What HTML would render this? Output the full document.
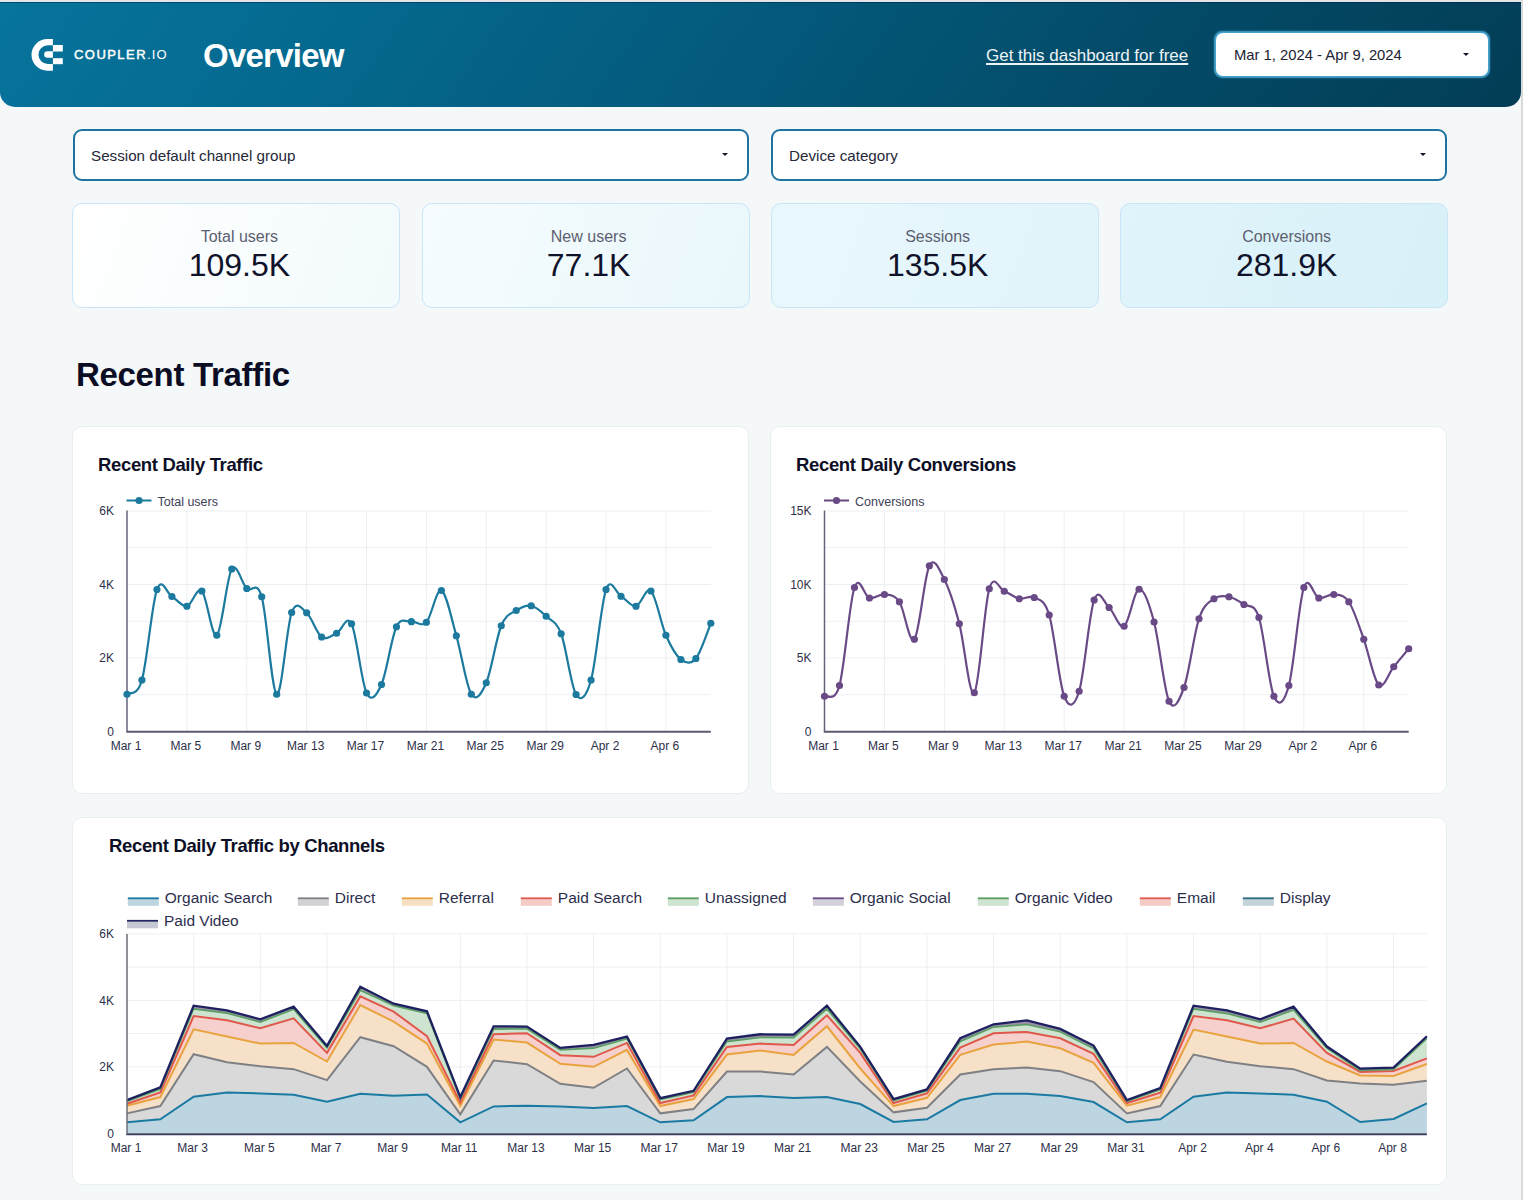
<!DOCTYPE html>
<html><head><meta charset="utf-8">
<style>
html,body{margin:0;padding:0;}
body{width:1523px;height:1200px;overflow:hidden;position:relative;background:#f4f8f9;font-family:"Liberation Sans", sans-serif;}
.abs{position:absolute;}
#topstrip{left:0;top:0;width:1523px;height:2px;background:#e4e5e7;}
#rightstrip{left:1521px;top:0;width:2px;height:1200px;background:#d8d9da;}
#header{left:0;top:2px;width:1521px;height:105px;border-radius:0 0 15px 15px;
  background:linear-gradient(125deg,#07749c 0%,#05698f 22%,#045a7c 48%,#034c69 72%,#033d56 100%);border-top:1px solid rgba(0,25,70,0.45);box-sizing:border-box;}
.logo-text{left:74px;top:47px;color:#fff;font-size:13px;letter-spacing:1.45px;font-weight:normal;-webkit-text-stroke:0.45px #fff;}
.overview{left:203px;top:37px;color:#fff;font-size:33px;font-weight:bold;letter-spacing:-0.75px;}
.gethis{left:986px;top:46px;color:#eef4f7;font-size:17px;text-decoration:underline;text-decoration-thickness:1.6px;text-underline-offset:1.6px;}
.datebox{left:1216px;top:33px;width:272px;height:43px;background:#fff;border-radius:7px;box-shadow:0 0 1.5px 1.2px rgba(80,175,220,0.9);}
.datebox span{position:absolute;left:18px;top:13.5px;font-size:14.8px;color:#202233;}
.caret{position:absolute;width:0;height:0;border-left:3.3px solid transparent;border-right:3.3px solid transparent;border-top:3.6px solid #15152a;}
.dd{top:129px;width:676px;height:52px;background:#fff;border:2.2px solid #1e74a0;border-radius:9px;box-sizing:border-box;}
.dd span{position:absolute;left:16px;top:15.5px;font-size:15.2px;color:#262838;}
.kpi{top:202.6px;width:328px;height:105.4px;border:1.8px solid #c9e5f8;border-radius:10px;box-sizing:border-box;}
.kpi .lab{position:absolute;left:6px;right:0;top:24px;text-align:center;font-size:16px;color:#5c6070;}
.kpi .val{position:absolute;left:6px;right:0;top:43px;text-align:center;font-size:32px;color:#10122a;}
.h2{left:76px;top:356px;font-size:33px;font-weight:bold;color:#0b0d24;letter-spacing:-0.32px;}
.card{background:#fff;border:1px solid #e9eef1;border-radius:10px;box-sizing:border-box;}
.ctitle{font-size:18.5px;font-weight:bold;color:#0d0f26;letter-spacing:-0.35px;}
svg text{font-family:"Liberation Sans", sans-serif;}
</style></head><body>
<div id="topstrip" class="abs"></div>
<div id="header" class="abs"></div>
<div id="rightstrip" class="abs"></div>
<svg class="abs" style="left:0;top:0" width="80" height="80" viewBox="0 0 80 80">
  <path d="M52.9,39 L47.35,39 A15.85,15.85 0 0 0 47.35,70.7 L52.9,70.7 L52.9,64 L47.85,64 A9.4,9.4 0 0 1 47.85,45.2 L52.9,45.2 Z" fill="#fff"/>
  <path d="M52.9,51.2 L47.5,51.2 A3.3,3.3 0 0 0 47.5,57.85 L52.9,57.85 Z" fill="#fff"/>
  <rect x="52.9" y="45" width="9.9" height="6.5" fill="#fff"/>
  <rect x="52.9" y="58.2" width="9.9" height="6" fill="#fff"/>
</svg>
<div class="abs logo-text">COUPLER<span style="-webkit-text-stroke:0;letter-spacing:1.2px">.IO</span></div>
<div class="abs overview">Overview</div>
<div class="abs gethis">Get this dashboard for free</div>
<div class="abs datebox"><span>Mar 1, 2024 - Apr 9, 2024</span><div class="caret" style="left:247px;top:20px"></div></div>

<div class="abs dd" style="left:73px"><span>Session default channel group</span><div class="caret" style="left:647px;top:22px"></div></div>
<div class="abs dd" style="left:771px"><span>Device category</span><div class="caret" style="left:647px;top:22px"></div></div>

<div class="abs kpi" style="left:72.4px;background:linear-gradient(110deg,#ffffff 0%,#f2fafc 100%)"><div class="lab">Total users</div><div class="val">109.5K</div></div>
<div class="abs kpi" style="left:421.6px;background:linear-gradient(110deg,#f6fcfe 0%,#e9f7fb 100%)"><div class="lab">New users</div><div class="val">77.1K</div></div>
<div class="abs kpi" style="left:770.6px;background:linear-gradient(110deg,#e9f8fd 0%,#e1f4fa 100%)"><div class="lab">Sessions</div><div class="val">135.5K</div></div>
<div class="abs kpi" style="left:1119.6px;background:linear-gradient(110deg,#e0f4fb 0%,#d8f0f8 100%)"><div class="lab">Conversions</div><div class="val">281.9K</div></div>

<div class="abs h2">Recent Traffic</div>

<div class="abs card" style="left:72.3px;top:425.5px;width:676.5px;height:368.8px"></div>
<div class="abs card" style="left:770.3px;top:425.5px;width:676.5px;height:368.8px"></div>
<div class="abs card" style="left:72.3px;top:816.5px;width:1374.5px;height:368.5px"></div>
<div class="abs ctitle" style="left:98px;top:454px">Recent Daily Traffic</div>
<div class="abs ctitle" style="left:796px;top:454px">Recent Daily Conversions</div>
<div class="abs ctitle" style="left:109px;top:835px">Recent Daily Traffic by Channels</div>

<svg class="abs" style="left:0;top:0" width="1523" height="1200" viewBox="0 0 1523 1200">
<line x1="127" y1="694.75" x2="710.83" y2="694.75" stroke="#eceff1" stroke-width="1"/>
<line x1="127" y1="658.00" x2="710.83" y2="658.00" stroke="#eceff1" stroke-width="1"/>
<line x1="127" y1="621.25" x2="710.83" y2="621.25" stroke="#eceff1" stroke-width="1"/>
<line x1="127" y1="584.50" x2="710.83" y2="584.50" stroke="#eceff1" stroke-width="1"/>
<line x1="127" y1="547.75" x2="710.83" y2="547.75" stroke="#eceff1" stroke-width="1"/>
<line x1="127" y1="511.00" x2="710.83" y2="511.00" stroke="#eceff1" stroke-width="1"/>
<line x1="186.88" y1="510.5" x2="186.88" y2="731" stroke="#eceff1" stroke-width="1"/>
<line x1="246.76" y1="510.5" x2="246.76" y2="731" stroke="#eceff1" stroke-width="1"/>
<line x1="306.64" y1="510.5" x2="306.64" y2="731" stroke="#eceff1" stroke-width="1"/>
<line x1="366.52" y1="510.5" x2="366.52" y2="731" stroke="#eceff1" stroke-width="1"/>
<line x1="426.40" y1="510.5" x2="426.40" y2="731" stroke="#eceff1" stroke-width="1"/>
<line x1="486.28" y1="510.5" x2="486.28" y2="731" stroke="#eceff1" stroke-width="1"/>
<line x1="546.16" y1="510.5" x2="546.16" y2="731" stroke="#eceff1" stroke-width="1"/>
<line x1="606.04" y1="510.5" x2="606.04" y2="731" stroke="#eceff1" stroke-width="1"/>
<line x1="665.92" y1="510.5" x2="665.92" y2="731" stroke="#eceff1" stroke-width="1"/>
<line x1="127" y1="510.5" x2="127" y2="731" stroke="#65637c" stroke-width="1.5"/>
<line x1="126.25" y1="731.8" x2="710.83" y2="731.8" stroke="#5b5a70" stroke-width="2"/>
<path d="M127.00,694.25 C129.50,691.87 136.98,697.45 141.97,679.99 C146.96,662.53 151.95,603.43 156.94,589.51 C161.93,575.60 166.92,593.71 171.91,596.50 C176.90,599.28 181.89,607.15 186.88,606.23 C191.87,605.31 196.86,586.14 201.85,590.98 C206.84,595.82 211.83,638.93 216.82,635.27 C221.81,631.60 226.80,576.80 231.79,569.01 C236.78,561.21 241.77,583.86 246.76,588.48 C251.75,593.11 256.74,579.12 261.73,596.75 C266.72,614.38 271.71,691.62 276.70,694.25 C281.69,696.88 286.68,626.10 291.67,612.52 C296.66,598.93 301.65,608.66 306.64,612.74 C311.63,616.82 316.62,633.58 321.61,636.99 C326.60,640.41 331.59,635.45 336.58,633.25 C341.57,631.04 346.56,613.80 351.55,623.76 C356.54,633.72 361.53,682.88 366.52,693.00 C371.51,703.13 376.50,695.55 381.49,684.51 C386.48,673.47 391.47,637.21 396.46,626.74 C401.45,616.27 406.44,622.42 411.43,621.67 C416.42,620.92 421.41,627.45 426.40,622.26 C431.39,617.06 436.38,588.26 441.37,590.50 C446.36,592.75 451.35,618.45 456.34,635.74 C461.33,653.03 466.32,686.42 471.31,694.25 C476.30,702.08 481.29,694.16 486.28,682.75 C491.27,671.33 496.26,637.79 501.25,625.75 C506.24,613.71 511.23,613.83 516.22,610.50 C521.21,607.16 526.20,604.79 531.19,605.76 C536.18,606.72 541.17,611.60 546.16,616.27 C551.15,620.93 556.14,620.72 561.13,633.76 C566.12,646.80 571.11,686.80 576.10,694.51 C581.09,702.21 586.08,697.49 591.07,679.99 C596.06,662.49 601.05,603.47 606.04,589.51 C611.03,575.55 616.02,593.45 621.01,596.24 C626.00,599.02 630.99,607.11 635.98,606.23 C640.97,605.36 645.96,586.14 650.95,590.98 C655.94,595.82 660.93,623.85 665.92,635.27 C670.91,646.68 675.90,655.61 680.89,659.48 C685.88,663.36 690.87,664.53 695.86,658.49 C700.85,652.45 708.34,629.12 710.83,623.25" fill="none" stroke="#1b7a9e" stroke-width="2.2"/>
<circle cx="127.00" cy="694.25" r="3.6" fill="#1b7a9e"/>
<circle cx="141.97" cy="679.99" r="3.6" fill="#1b7a9e"/>
<circle cx="156.94" cy="589.51" r="3.6" fill="#1b7a9e"/>
<circle cx="171.91" cy="596.50" r="3.6" fill="#1b7a9e"/>
<circle cx="186.88" cy="606.23" r="3.6" fill="#1b7a9e"/>
<circle cx="201.85" cy="590.98" r="3.6" fill="#1b7a9e"/>
<circle cx="216.82" cy="635.27" r="3.6" fill="#1b7a9e"/>
<circle cx="231.79" cy="569.01" r="3.6" fill="#1b7a9e"/>
<circle cx="246.76" cy="588.48" r="3.6" fill="#1b7a9e"/>
<circle cx="261.73" cy="596.75" r="3.6" fill="#1b7a9e"/>
<circle cx="276.70" cy="694.25" r="3.6" fill="#1b7a9e"/>
<circle cx="291.67" cy="612.52" r="3.6" fill="#1b7a9e"/>
<circle cx="306.64" cy="612.74" r="3.6" fill="#1b7a9e"/>
<circle cx="321.61" cy="636.99" r="3.6" fill="#1b7a9e"/>
<circle cx="336.58" cy="633.25" r="3.6" fill="#1b7a9e"/>
<circle cx="351.55" cy="623.76" r="3.6" fill="#1b7a9e"/>
<circle cx="366.52" cy="693.00" r="3.6" fill="#1b7a9e"/>
<circle cx="381.49" cy="684.51" r="3.6" fill="#1b7a9e"/>
<circle cx="396.46" cy="626.74" r="3.6" fill="#1b7a9e"/>
<circle cx="411.43" cy="621.67" r="3.6" fill="#1b7a9e"/>
<circle cx="426.40" cy="622.26" r="3.6" fill="#1b7a9e"/>
<circle cx="441.37" cy="590.50" r="3.6" fill="#1b7a9e"/>
<circle cx="456.34" cy="635.74" r="3.6" fill="#1b7a9e"/>
<circle cx="471.31" cy="694.25" r="3.6" fill="#1b7a9e"/>
<circle cx="486.28" cy="682.75" r="3.6" fill="#1b7a9e"/>
<circle cx="501.25" cy="625.75" r="3.6" fill="#1b7a9e"/>
<circle cx="516.22" cy="610.50" r="3.6" fill="#1b7a9e"/>
<circle cx="531.19" cy="605.76" r="3.6" fill="#1b7a9e"/>
<circle cx="546.16" cy="616.27" r="3.6" fill="#1b7a9e"/>
<circle cx="561.13" cy="633.76" r="3.6" fill="#1b7a9e"/>
<circle cx="576.10" cy="694.51" r="3.6" fill="#1b7a9e"/>
<circle cx="591.07" cy="679.99" r="3.6" fill="#1b7a9e"/>
<circle cx="606.04" cy="589.51" r="3.6" fill="#1b7a9e"/>
<circle cx="621.01" cy="596.24" r="3.6" fill="#1b7a9e"/>
<circle cx="635.98" cy="606.23" r="3.6" fill="#1b7a9e"/>
<circle cx="650.95" cy="590.98" r="3.6" fill="#1b7a9e"/>
<circle cx="665.92" cy="635.27" r="3.6" fill="#1b7a9e"/>
<circle cx="680.89" cy="659.48" r="3.6" fill="#1b7a9e"/>
<circle cx="695.86" cy="658.49" r="3.6" fill="#1b7a9e"/>
<circle cx="710.83" cy="623.25" r="3.6" fill="#1b7a9e"/>
<text x="114" y="735.50" text-anchor="end" font-size="12" fill="#2d2f48">0</text>
<text x="114" y="662.00" text-anchor="end" font-size="12" fill="#2d2f48">2K</text>
<text x="114" y="588.50" text-anchor="end" font-size="12" fill="#2d2f48">4K</text>
<text x="114" y="515.00" text-anchor="end" font-size="12" fill="#2d2f48">6K</text>
<text x="126.00" y="749.8" text-anchor="middle" font-size="12" fill="#2d2f48">Mar 1</text>
<text x="185.88" y="749.8" text-anchor="middle" font-size="12" fill="#2d2f48">Mar 5</text>
<text x="245.76" y="749.8" text-anchor="middle" font-size="12" fill="#2d2f48">Mar 9</text>
<text x="305.64" y="749.8" text-anchor="middle" font-size="12" fill="#2d2f48">Mar 13</text>
<text x="365.52" y="749.8" text-anchor="middle" font-size="12" fill="#2d2f48">Mar 17</text>
<text x="425.40" y="749.8" text-anchor="middle" font-size="12" fill="#2d2f48">Mar 21</text>
<text x="485.28" y="749.8" text-anchor="middle" font-size="12" fill="#2d2f48">Mar 25</text>
<text x="545.16" y="749.8" text-anchor="middle" font-size="12" fill="#2d2f48">Mar 29</text>
<text x="605.04" y="749.8" text-anchor="middle" font-size="12" fill="#2d2f48">Apr 2</text>
<text x="664.92" y="749.8" text-anchor="middle" font-size="12" fill="#2d2f48">Apr 6</text>
<line x1="126.5" y1="500.5" x2="151.5" y2="500.5" stroke="#1b7a9e" stroke-width="2"/>
<circle cx="139.0" cy="500.5" r="3.6" fill="#1b7a9e"/>
<text x="157.5" y="505.8" font-size="12.5" fill="#3f4159">Total users</text>
<line x1="824.5" y1="694.75" x2="1408.72" y2="694.75" stroke="#eceff1" stroke-width="1"/>
<line x1="824.5" y1="658.00" x2="1408.72" y2="658.00" stroke="#eceff1" stroke-width="1"/>
<line x1="824.5" y1="621.25" x2="1408.72" y2="621.25" stroke="#eceff1" stroke-width="1"/>
<line x1="824.5" y1="584.50" x2="1408.72" y2="584.50" stroke="#eceff1" stroke-width="1"/>
<line x1="824.5" y1="547.75" x2="1408.72" y2="547.75" stroke="#eceff1" stroke-width="1"/>
<line x1="824.5" y1="511.00" x2="1408.72" y2="511.00" stroke="#eceff1" stroke-width="1"/>
<line x1="884.42" y1="510.5" x2="884.42" y2="731" stroke="#eceff1" stroke-width="1"/>
<line x1="944.34" y1="510.5" x2="944.34" y2="731" stroke="#eceff1" stroke-width="1"/>
<line x1="1004.26" y1="510.5" x2="1004.26" y2="731" stroke="#eceff1" stroke-width="1"/>
<line x1="1064.18" y1="510.5" x2="1064.18" y2="731" stroke="#eceff1" stroke-width="1"/>
<line x1="1124.10" y1="510.5" x2="1124.10" y2="731" stroke="#eceff1" stroke-width="1"/>
<line x1="1184.02" y1="510.5" x2="1184.02" y2="731" stroke="#eceff1" stroke-width="1"/>
<line x1="1243.94" y1="510.5" x2="1243.94" y2="731" stroke="#eceff1" stroke-width="1"/>
<line x1="1303.86" y1="510.5" x2="1303.86" y2="731" stroke="#eceff1" stroke-width="1"/>
<line x1="1363.78" y1="510.5" x2="1363.78" y2="731" stroke="#eceff1" stroke-width="1"/>
<line x1="824.5" y1="510.5" x2="824.5" y2="731" stroke="#65637c" stroke-width="1.5"/>
<line x1="823.75" y1="731.8" x2="1408.72" y2="731.8" stroke="#5b5a70" stroke-width="2"/>
<path d="M824.50,696.25 C827.00,694.46 834.49,703.63 839.48,685.50 C844.47,667.38 849.47,602.08 854.46,587.50 C859.45,572.91 864.45,596.83 869.44,597.99 C874.43,599.16 879.43,593.87 884.42,594.50 C889.41,595.12 894.41,594.28 899.40,601.74 C904.39,609.20 909.39,645.25 914.38,639.26 C919.37,633.26 924.37,575.72 929.36,565.76 C934.35,555.80 939.35,569.84 944.34,579.50 C949.33,589.17 954.33,604.87 959.32,623.75 C964.31,642.62 969.31,698.58 974.30,692.75 C979.29,686.92 984.29,605.67 989.28,588.75 C994.27,571.83 999.27,589.58 1004.26,591.25 C1009.25,592.91 1014.25,597.70 1019.24,598.74 C1024.23,599.79 1029.23,594.78 1034.22,597.49 C1039.21,600.20 1044.21,598.54 1049.20,615.00 C1054.19,631.46 1059.19,683.54 1064.18,696.25 C1069.17,708.96 1074.17,707.29 1079.16,691.25 C1084.15,675.21 1089.15,613.95 1094.14,599.99 C1099.13,586.04 1104.13,603.13 1109.12,607.51 C1114.11,611.88 1119.11,629.29 1124.10,626.25 C1129.09,623.20 1134.09,589.96 1139.08,589.25 C1144.07,588.54 1149.07,603.33 1154.06,622.00 C1159.05,640.67 1164.05,690.33 1169.04,701.25 C1174.03,712.16 1179.03,701.25 1184.02,687.50 C1189.01,673.75 1194.01,633.54 1199.00,618.75 C1203.99,603.96 1208.99,602.41 1213.98,598.74 C1218.97,595.08 1223.97,595.78 1228.96,596.74 C1233.95,597.71 1238.95,601.05 1243.94,604.51 C1248.93,607.97 1253.93,602.21 1258.92,617.50 C1263.91,632.79 1268.91,684.92 1273.90,696.25 C1278.89,707.58 1283.89,703.63 1288.88,685.50 C1293.87,667.38 1298.87,602.08 1303.86,587.50 C1308.85,572.91 1313.85,596.83 1318.84,597.99 C1323.83,599.16 1328.83,593.87 1333.82,594.50 C1338.81,595.12 1343.81,594.28 1348.80,601.74 C1353.79,609.20 1358.79,625.38 1363.78,639.26 C1368.77,653.13 1373.77,680.42 1378.76,685.00 C1383.75,689.59 1388.75,672.79 1393.74,666.75 C1398.73,660.70 1406.22,651.75 1408.72,648.75" fill="none" stroke="#6a4a86" stroke-width="2.2"/>
<circle cx="824.50" cy="696.25" r="3.6" fill="#6a4a86"/>
<circle cx="839.48" cy="685.50" r="3.6" fill="#6a4a86"/>
<circle cx="854.46" cy="587.50" r="3.6" fill="#6a4a86"/>
<circle cx="869.44" cy="597.99" r="3.6" fill="#6a4a86"/>
<circle cx="884.42" cy="594.50" r="3.6" fill="#6a4a86"/>
<circle cx="899.40" cy="601.74" r="3.6" fill="#6a4a86"/>
<circle cx="914.38" cy="639.26" r="3.6" fill="#6a4a86"/>
<circle cx="929.36" cy="565.76" r="3.6" fill="#6a4a86"/>
<circle cx="944.34" cy="579.50" r="3.6" fill="#6a4a86"/>
<circle cx="959.32" cy="623.75" r="3.6" fill="#6a4a86"/>
<circle cx="974.30" cy="692.75" r="3.6" fill="#6a4a86"/>
<circle cx="989.28" cy="588.75" r="3.6" fill="#6a4a86"/>
<circle cx="1004.26" cy="591.25" r="3.6" fill="#6a4a86"/>
<circle cx="1019.24" cy="598.74" r="3.6" fill="#6a4a86"/>
<circle cx="1034.22" cy="597.49" r="3.6" fill="#6a4a86"/>
<circle cx="1049.20" cy="615.00" r="3.6" fill="#6a4a86"/>
<circle cx="1064.18" cy="696.25" r="3.6" fill="#6a4a86"/>
<circle cx="1079.16" cy="691.25" r="3.6" fill="#6a4a86"/>
<circle cx="1094.14" cy="599.99" r="3.6" fill="#6a4a86"/>
<circle cx="1109.12" cy="607.51" r="3.6" fill="#6a4a86"/>
<circle cx="1124.10" cy="626.25" r="3.6" fill="#6a4a86"/>
<circle cx="1139.08" cy="589.25" r="3.6" fill="#6a4a86"/>
<circle cx="1154.06" cy="622.00" r="3.6" fill="#6a4a86"/>
<circle cx="1169.04" cy="701.25" r="3.6" fill="#6a4a86"/>
<circle cx="1184.02" cy="687.50" r="3.6" fill="#6a4a86"/>
<circle cx="1199.00" cy="618.75" r="3.6" fill="#6a4a86"/>
<circle cx="1213.98" cy="598.74" r="3.6" fill="#6a4a86"/>
<circle cx="1228.96" cy="596.74" r="3.6" fill="#6a4a86"/>
<circle cx="1243.94" cy="604.51" r="3.6" fill="#6a4a86"/>
<circle cx="1258.92" cy="617.50" r="3.6" fill="#6a4a86"/>
<circle cx="1273.90" cy="696.25" r="3.6" fill="#6a4a86"/>
<circle cx="1288.88" cy="685.50" r="3.6" fill="#6a4a86"/>
<circle cx="1303.86" cy="587.50" r="3.6" fill="#6a4a86"/>
<circle cx="1318.84" cy="597.99" r="3.6" fill="#6a4a86"/>
<circle cx="1333.82" cy="594.50" r="3.6" fill="#6a4a86"/>
<circle cx="1348.80" cy="601.74" r="3.6" fill="#6a4a86"/>
<circle cx="1363.78" cy="639.26" r="3.6" fill="#6a4a86"/>
<circle cx="1378.76" cy="685.00" r="3.6" fill="#6a4a86"/>
<circle cx="1393.74" cy="666.75" r="3.6" fill="#6a4a86"/>
<circle cx="1408.72" cy="648.75" r="3.6" fill="#6a4a86"/>
<text x="811.5" y="735.50" text-anchor="end" font-size="12" fill="#2d2f48">0</text>
<text x="811.5" y="662.00" text-anchor="end" font-size="12" fill="#2d2f48">5K</text>
<text x="811.5" y="588.50" text-anchor="end" font-size="12" fill="#2d2f48">10K</text>
<text x="811.5" y="515.00" text-anchor="end" font-size="12" fill="#2d2f48">15K</text>
<text x="823.50" y="749.8" text-anchor="middle" font-size="12" fill="#2d2f48">Mar 1</text>
<text x="883.42" y="749.8" text-anchor="middle" font-size="12" fill="#2d2f48">Mar 5</text>
<text x="943.34" y="749.8" text-anchor="middle" font-size="12" fill="#2d2f48">Mar 9</text>
<text x="1003.26" y="749.8" text-anchor="middle" font-size="12" fill="#2d2f48">Mar 13</text>
<text x="1063.18" y="749.8" text-anchor="middle" font-size="12" fill="#2d2f48">Mar 17</text>
<text x="1123.10" y="749.8" text-anchor="middle" font-size="12" fill="#2d2f48">Mar 21</text>
<text x="1183.02" y="749.8" text-anchor="middle" font-size="12" fill="#2d2f48">Mar 25</text>
<text x="1242.94" y="749.8" text-anchor="middle" font-size="12" fill="#2d2f48">Mar 29</text>
<text x="1302.86" y="749.8" text-anchor="middle" font-size="12" fill="#2d2f48">Apr 2</text>
<text x="1362.78" y="749.8" text-anchor="middle" font-size="12" fill="#2d2f48">Apr 6</text>
<line x1="824.0" y1="500.5" x2="849.0" y2="500.5" stroke="#6a4a86" stroke-width="2"/>
<circle cx="836.5" cy="500.5" r="3.6" fill="#6a4a86"/>
<text x="855.0" y="505.8" font-size="12.5" fill="#3f4159">Conversions</text>
<line x1="127" y1="1100.07" x2="1426.87" y2="1100.07" stroke="#eceff1" stroke-width="1"/>
<line x1="127" y1="1066.83" x2="1426.87" y2="1066.83" stroke="#eceff1" stroke-width="1"/>
<line x1="127" y1="1033.60" x2="1426.87" y2="1033.60" stroke="#eceff1" stroke-width="1"/>
<line x1="127" y1="1000.37" x2="1426.87" y2="1000.37" stroke="#eceff1" stroke-width="1"/>
<line x1="127" y1="967.13" x2="1426.87" y2="967.13" stroke="#eceff1" stroke-width="1"/>
<line x1="127" y1="933.90" x2="1426.87" y2="933.90" stroke="#eceff1" stroke-width="1"/>
<line x1="193.66" y1="933.9" x2="193.66" y2="1133.3" stroke="#eceff1" stroke-width="1"/>
<line x1="260.32" y1="933.9" x2="260.32" y2="1133.3" stroke="#eceff1" stroke-width="1"/>
<line x1="326.98" y1="933.9" x2="326.98" y2="1133.3" stroke="#eceff1" stroke-width="1"/>
<line x1="393.64" y1="933.9" x2="393.64" y2="1133.3" stroke="#eceff1" stroke-width="1"/>
<line x1="460.30" y1="933.9" x2="460.30" y2="1133.3" stroke="#eceff1" stroke-width="1"/>
<line x1="526.96" y1="933.9" x2="526.96" y2="1133.3" stroke="#eceff1" stroke-width="1"/>
<line x1="593.62" y1="933.9" x2="593.62" y2="1133.3" stroke="#eceff1" stroke-width="1"/>
<line x1="660.28" y1="933.9" x2="660.28" y2="1133.3" stroke="#eceff1" stroke-width="1"/>
<line x1="726.94" y1="933.9" x2="726.94" y2="1133.3" stroke="#eceff1" stroke-width="1"/>
<line x1="793.60" y1="933.9" x2="793.60" y2="1133.3" stroke="#eceff1" stroke-width="1"/>
<line x1="860.26" y1="933.9" x2="860.26" y2="1133.3" stroke="#eceff1" stroke-width="1"/>
<line x1="926.92" y1="933.9" x2="926.92" y2="1133.3" stroke="#eceff1" stroke-width="1"/>
<line x1="993.58" y1="933.9" x2="993.58" y2="1133.3" stroke="#eceff1" stroke-width="1"/>
<line x1="1060.24" y1="933.9" x2="1060.24" y2="1133.3" stroke="#eceff1" stroke-width="1"/>
<line x1="1126.90" y1="933.9" x2="1126.90" y2="1133.3" stroke="#eceff1" stroke-width="1"/>
<line x1="1193.56" y1="933.9" x2="1193.56" y2="1133.3" stroke="#eceff1" stroke-width="1"/>
<line x1="1260.22" y1="933.9" x2="1260.22" y2="1133.3" stroke="#eceff1" stroke-width="1"/>
<line x1="1326.88" y1="933.9" x2="1326.88" y2="1133.3" stroke="#eceff1" stroke-width="1"/>
<line x1="1393.54" y1="933.9" x2="1393.54" y2="1133.3" stroke="#eceff1" stroke-width="1"/>
<path d="M127.00,1122.33 L160.33,1119.34 L193.66,1096.74 L226.99,1092.42 L260.32,1093.42 L293.65,1094.75 L326.98,1101.73 L360.31,1093.75 L393.64,1095.75 L426.97,1094.42 L460.30,1122.33 L493.63,1106.38 L526.96,1105.72 L560.29,1106.38 L593.62,1108.04 L626.95,1106.05 L660.28,1122.33 L693.61,1120.34 L726.94,1097.08 L760.27,1096.08 L793.60,1098.07 L826.93,1097.08 L860.26,1104.05 L893.59,1122.00 L926.92,1119.34 L960.25,1100.07 L993.58,1093.75 L1026.91,1093.75 L1060.24,1096.08 L1093.57,1102.06 L1126.90,1122.33 L1160.23,1119.34 L1193.56,1096.74 L1226.89,1092.42 L1260.22,1093.42 L1293.55,1094.75 L1326.88,1101.73 L1360.21,1122.00 L1393.54,1119.01 L1426.87,1103.39 L1426.87,1133.30 L1393.54,1133.30 L1360.21,1133.30 L1326.88,1133.30 L1293.55,1133.30 L1260.22,1133.30 L1226.89,1133.30 L1193.56,1133.30 L1160.23,1133.30 L1126.90,1133.30 L1093.57,1133.30 L1060.24,1133.30 L1026.91,1133.30 L993.58,1133.30 L960.25,1133.30 L926.92,1133.30 L893.59,1133.30 L860.26,1133.30 L826.93,1133.30 L793.60,1133.30 L760.27,1133.30 L726.94,1133.30 L693.61,1133.30 L660.28,1133.30 L626.95,1133.30 L593.62,1133.30 L560.29,1133.30 L526.96,1133.30 L493.63,1133.30 L460.30,1133.30 L426.97,1133.30 L393.64,1133.30 L360.31,1133.30 L326.98,1133.30 L293.65,1133.30 L260.32,1133.30 L226.99,1133.30 L193.66,1133.30 L160.33,1133.30 L127.00,1133.30 Z" fill="#bcd5e1" stroke="none"/>
<path d="M127.00,1113.36 L160.33,1106.05 L193.66,1054.20 L226.99,1062.18 L260.32,1066.17 L293.65,1069.16 L326.98,1080.13 L360.31,1037.26 L393.64,1046.23 L426.97,1066.83 L460.30,1114.36 L493.63,1060.52 L526.96,1064.17 L560.29,1083.78 L593.62,1087.77 L626.95,1068.49 L660.28,1113.36 L693.61,1109.04 L726.94,1071.49 L760.27,1071.49 L793.60,1074.48 L826.93,1046.89 L860.26,1081.46 L893.59,1112.36 L926.92,1107.71 L960.25,1074.48 L993.58,1069.16 L1026.91,1067.50 L1060.24,1071.15 L1093.57,1082.12 L1126.90,1113.36 L1160.23,1106.05 L1193.56,1054.54 L1226.89,1061.85 L1260.22,1066.17 L1293.55,1069.16 L1326.88,1080.46 L1360.21,1083.45 L1393.54,1084.78 L1426.87,1080.79 L1426.87,1103.39 L1393.54,1119.01 L1360.21,1122.00 L1326.88,1101.73 L1293.55,1094.75 L1260.22,1093.42 L1226.89,1092.42 L1193.56,1096.74 L1160.23,1119.34 L1126.90,1122.33 L1093.57,1102.06 L1060.24,1096.08 L1026.91,1093.75 L993.58,1093.75 L960.25,1100.07 L926.92,1119.34 L893.59,1122.00 L860.26,1104.05 L826.93,1097.08 L793.60,1098.07 L760.27,1096.08 L726.94,1097.08 L693.61,1120.34 L660.28,1122.33 L626.95,1106.05 L593.62,1108.04 L560.29,1106.38 L526.96,1105.72 L493.63,1106.38 L460.30,1122.33 L426.97,1094.42 L393.64,1095.75 L360.31,1093.75 L326.98,1101.73 L293.65,1094.75 L260.32,1093.42 L226.99,1092.42 L193.66,1096.74 L160.33,1119.34 L127.00,1122.33 Z" fill="#d9d9da" stroke="none"/>
<path d="M127.00,1105.72 L160.33,1097.08 L193.66,1029.28 L226.99,1036.59 L260.32,1043.57 L293.65,1042.91 L326.98,1061.52 L360.31,1005.02 L393.64,1021.64 L426.97,1043.57 L460.30,1105.72 L493.63,1039.58 L526.96,1042.57 L560.29,1063.84 L593.62,1066.83 L626.95,1049.88 L660.28,1106.05 L693.61,1099.07 L726.94,1054.54 L760.27,1050.55 L793.60,1054.87 L826.93,1026.29 L860.26,1068.49 L893.59,1106.05 L926.92,1097.74 L960.25,1054.87 L993.58,1044.57 L1026.91,1041.58 L1060.24,1048.22 L1093.57,1062.85 L1126.90,1105.72 L1160.23,1097.08 L1193.56,1029.61 L1226.89,1036.59 L1260.22,1043.57 L1293.55,1042.91 L1326.88,1061.52 L1360.21,1075.47 L1393.54,1075.91 L1426.87,1064.01 L1426.87,1080.79 L1393.54,1084.78 L1360.21,1083.45 L1326.88,1080.46 L1293.55,1069.16 L1260.22,1066.17 L1226.89,1061.85 L1193.56,1054.54 L1160.23,1106.05 L1126.90,1113.36 L1093.57,1082.12 L1060.24,1071.15 L1026.91,1067.50 L993.58,1069.16 L960.25,1074.48 L926.92,1107.71 L893.59,1112.36 L860.26,1081.46 L826.93,1046.89 L793.60,1074.48 L760.27,1071.49 L726.94,1071.49 L693.61,1109.04 L660.28,1113.36 L626.95,1068.49 L593.62,1087.77 L560.29,1083.78 L526.96,1064.17 L493.63,1060.52 L460.30,1114.36 L426.97,1066.83 L393.64,1046.23 L360.31,1037.26 L326.98,1080.13 L293.65,1069.16 L260.32,1066.17 L226.99,1062.18 L193.66,1054.20 L160.33,1106.05 L127.00,1113.36 Z" fill="#f6e1c8" stroke="none"/>
<path d="M127.00,1103.72 L160.33,1092.42 L193.66,1015.99 L226.99,1020.31 L260.32,1028.28 L293.65,1018.31 L326.98,1052.88 L360.31,996.38 L393.64,1011.67 L426.97,1036.26 L460.30,1102.39 L493.63,1034.26 L526.96,1033.27 L560.29,1055.20 L593.62,1056.86 L626.95,1042.91 L660.28,1103.06 L693.61,1095.41 L726.94,1046.89 L760.27,1043.57 L793.60,1044.90 L826.93,1015.32 L860.26,1052.88 L893.59,1103.06 L926.92,1093.42 L960.25,1047.56 L993.58,1033.27 L1026.91,1031.94 L1060.24,1038.25 L1093.57,1053.87 L1126.90,1103.06 L1160.23,1092.76 L1193.56,1015.99 L1226.89,1020.31 L1260.22,1028.28 L1293.55,1018.64 L1326.88,1052.88 L1360.21,1071.98 L1393.54,1070.99 L1426.87,1058.33 L1426.87,1064.01 L1393.54,1075.91 L1360.21,1075.47 L1326.88,1061.52 L1293.55,1042.91 L1260.22,1043.57 L1226.89,1036.59 L1193.56,1029.61 L1160.23,1097.08 L1126.90,1105.72 L1093.57,1062.85 L1060.24,1048.22 L1026.91,1041.58 L993.58,1044.57 L960.25,1054.87 L926.92,1097.74 L893.59,1106.05 L860.26,1068.49 L826.93,1026.29 L793.60,1054.87 L760.27,1050.55 L726.94,1054.54 L693.61,1099.07 L660.28,1106.05 L626.95,1049.88 L593.62,1066.83 L560.29,1063.84 L526.96,1042.57 L493.63,1039.58 L460.30,1105.72 L426.97,1043.57 L393.64,1021.64 L360.31,1005.02 L326.98,1061.52 L293.65,1042.91 L260.32,1043.57 L226.99,1036.59 L193.66,1029.28 L160.33,1097.08 L127.00,1105.72 Z" fill="#f5d0cd" stroke="none"/>
<path d="M127.00,1101.23 L160.33,1089.07 L193.66,1008.94 L226.99,1013.13 L260.32,1022.10 L293.65,1009.24 L326.98,1047.99 L360.31,990.23 L393.64,1005.78 L426.97,1013.43 L460.30,1098.94 L493.63,1029.08 L526.96,1028.71 L560.29,1049.98 L593.62,1048.16 L626.95,1038.68 L660.28,1099.70 L693.61,1092.39 L726.94,1041.61 L760.27,1037.52 L793.60,1037.62 L826.93,1008.94 L860.26,1048.75 L893.59,1100.47 L926.92,1090.83 L960.25,1041.51 L993.58,1027.09 L1026.91,1024.49 L1060.24,1031.74 L1093.57,1048.59 L1126.90,1101.23 L1160.23,1089.50 L1193.56,1008.94 L1226.89,1013.59 L1260.22,1022.10 L1293.55,1009.94 L1326.88,1048.19 L1360.21,1070.53 L1393.54,1069.53 L1426.87,1038.35 L1426.87,1058.33 L1393.54,1070.99 L1360.21,1071.98 L1326.88,1052.88 L1293.55,1018.64 L1260.22,1028.28 L1226.89,1020.31 L1193.56,1015.99 L1160.23,1092.76 L1126.90,1103.06 L1093.57,1053.87 L1060.24,1038.25 L1026.91,1031.94 L993.58,1033.27 L960.25,1047.56 L926.92,1093.42 L893.59,1103.06 L860.26,1052.88 L826.93,1015.32 L793.60,1044.90 L760.27,1043.57 L726.94,1046.89 L693.61,1095.41 L660.28,1103.06 L626.95,1042.91 L593.62,1056.86 L560.29,1055.20 L526.96,1033.27 L493.63,1034.26 L460.30,1102.39 L426.97,1036.26 L393.64,1011.67 L360.31,996.38 L326.98,1052.88 L293.65,1018.31 L260.32,1028.28 L226.99,1020.31 L193.66,1015.99 L160.33,1092.42 L127.00,1103.72 Z" fill="#cfe4d0" stroke="none"/>
<path d="M127.00,1100.07 L160.33,1087.44 L193.66,1005.68 L226.99,1010.34 L260.32,1019.31 L293.65,1006.68 L326.98,1045.90 L360.31,986.74 L393.64,1003.69 L426.97,1011.33 L460.30,1097.08 L493.63,1026.29 L526.96,1026.62 L560.29,1047.89 L593.62,1044.90 L626.95,1036.59 L660.28,1098.07 L693.61,1090.76 L726.94,1038.59 L760.27,1034.26 L793.60,1034.60 L826.93,1005.68 L860.26,1046.89 L893.59,1099.07 L926.92,1089.43 L960.25,1038.25 L993.58,1024.29 L1026.91,1020.31 L1060.24,1028.95 L1093.57,1045.56 L1126.90,1100.07 L1160.23,1088.10 L1193.56,1005.68 L1226.89,1010.34 L1260.22,1019.31 L1293.55,1006.68 L1326.88,1046.56 L1360.21,1068.69 L1393.54,1067.66 L1426.87,1036.26 L1426.87,1038.35 L1393.54,1069.53 L1360.21,1070.53 L1326.88,1048.19 L1293.55,1009.94 L1260.22,1022.10 L1226.89,1013.59 L1193.56,1008.94 L1160.23,1089.50 L1126.90,1101.23 L1093.57,1048.59 L1060.24,1031.74 L1026.91,1024.49 L993.58,1027.09 L960.25,1041.51 L926.92,1090.83 L893.59,1100.47 L860.26,1048.75 L826.93,1008.94 L793.60,1037.62 L760.27,1037.52 L726.94,1041.61 L693.61,1092.39 L660.28,1099.70 L626.95,1038.68 L593.62,1048.16 L560.29,1049.98 L526.96,1028.71 L493.63,1029.08 L460.30,1098.94 L426.97,1013.43 L393.64,1005.78 L360.31,990.23 L326.98,1047.99 L293.65,1009.24 L260.32,1022.10 L226.99,1013.13 L193.66,1008.94 L160.33,1089.07 L127.00,1101.23 Z" fill="#9c8fa8" stroke="none"/>
<path d="M127.00,1122.33 L160.33,1119.34 L193.66,1096.74 L226.99,1092.42 L260.32,1093.42 L293.65,1094.75 L326.98,1101.73 L360.31,1093.75 L393.64,1095.75 L426.97,1094.42 L460.30,1122.33 L493.63,1106.38 L526.96,1105.72 L560.29,1106.38 L593.62,1108.04 L626.95,1106.05 L660.28,1122.33 L693.61,1120.34 L726.94,1097.08 L760.27,1096.08 L793.60,1098.07 L826.93,1097.08 L860.26,1104.05 L893.59,1122.00 L926.92,1119.34 L960.25,1100.07 L993.58,1093.75 L1026.91,1093.75 L1060.24,1096.08 L1093.57,1102.06 L1126.90,1122.33 L1160.23,1119.34 L1193.56,1096.74 L1226.89,1092.42 L1260.22,1093.42 L1293.55,1094.75 L1326.88,1101.73 L1360.21,1122.00 L1393.54,1119.01 L1426.87,1103.39" fill="none" stroke="#1b7aa2" stroke-width="2" stroke-linejoin="miter"/>
<path d="M127.00,1113.36 L160.33,1106.05 L193.66,1054.20 L226.99,1062.18 L260.32,1066.17 L293.65,1069.16 L326.98,1080.13 L360.31,1037.26 L393.64,1046.23 L426.97,1066.83 L460.30,1114.36 L493.63,1060.52 L526.96,1064.17 L560.29,1083.78 L593.62,1087.77 L626.95,1068.49 L660.28,1113.36 L693.61,1109.04 L726.94,1071.49 L760.27,1071.49 L793.60,1074.48 L826.93,1046.89 L860.26,1081.46 L893.59,1112.36 L926.92,1107.71 L960.25,1074.48 L993.58,1069.16 L1026.91,1067.50 L1060.24,1071.15 L1093.57,1082.12 L1126.90,1113.36 L1160.23,1106.05 L1193.56,1054.54 L1226.89,1061.85 L1260.22,1066.17 L1293.55,1069.16 L1326.88,1080.46 L1360.21,1083.45 L1393.54,1084.78 L1426.87,1080.79" fill="none" stroke="#7f8084" stroke-width="2" stroke-linejoin="miter"/>
<path d="M127.00,1105.72 L160.33,1097.08 L193.66,1029.28 L226.99,1036.59 L260.32,1043.57 L293.65,1042.91 L326.98,1061.52 L360.31,1005.02 L393.64,1021.64 L426.97,1043.57 L460.30,1105.72 L493.63,1039.58 L526.96,1042.57 L560.29,1063.84 L593.62,1066.83 L626.95,1049.88 L660.28,1106.05 L693.61,1099.07 L726.94,1054.54 L760.27,1050.55 L793.60,1054.87 L826.93,1026.29 L860.26,1068.49 L893.59,1106.05 L926.92,1097.74 L960.25,1054.87 L993.58,1044.57 L1026.91,1041.58 L1060.24,1048.22 L1093.57,1062.85 L1126.90,1105.72 L1160.23,1097.08 L1193.56,1029.61 L1226.89,1036.59 L1260.22,1043.57 L1293.55,1042.91 L1326.88,1061.52 L1360.21,1075.47 L1393.54,1075.91 L1426.87,1064.01" fill="none" stroke="#e9a33e" stroke-width="2" stroke-linejoin="miter"/>
<path d="M127.00,1103.72 L160.33,1092.42 L193.66,1015.99 L226.99,1020.31 L260.32,1028.28 L293.65,1018.31 L326.98,1052.88 L360.31,996.38 L393.64,1011.67 L426.97,1036.26 L460.30,1102.39 L493.63,1034.26 L526.96,1033.27 L560.29,1055.20 L593.62,1056.86 L626.95,1042.91 L660.28,1103.06 L693.61,1095.41 L726.94,1046.89 L760.27,1043.57 L793.60,1044.90 L826.93,1015.32 L860.26,1052.88 L893.59,1103.06 L926.92,1093.42 L960.25,1047.56 L993.58,1033.27 L1026.91,1031.94 L1060.24,1038.25 L1093.57,1053.87 L1126.90,1103.06 L1160.23,1092.76 L1193.56,1015.99 L1226.89,1020.31 L1260.22,1028.28 L1293.55,1018.64 L1326.88,1052.88 L1360.21,1071.98 L1393.54,1070.99 L1426.87,1058.33" fill="none" stroke="#e0584b" stroke-width="2" stroke-linejoin="miter"/>
<path d="M127.00,1101.23 L160.33,1089.07 L193.66,1008.94 L226.99,1013.13 L260.32,1022.10 L293.65,1009.24 L326.98,1047.99 L360.31,990.23 L393.64,1005.78 L426.97,1013.43 L460.30,1098.94 L493.63,1029.08 L526.96,1028.71 L560.29,1049.98 L593.62,1048.16 L626.95,1038.68 L660.28,1099.70 L693.61,1092.39 L726.94,1041.61 L760.27,1037.52 L793.60,1037.62 L826.93,1008.94 L860.26,1048.75 L893.59,1100.47 L926.92,1090.83 L960.25,1041.51 L993.58,1027.09 L1026.91,1024.49 L1060.24,1031.74 L1093.57,1048.59 L1126.90,1101.23 L1160.23,1089.50 L1193.56,1008.94 L1226.89,1013.59 L1260.22,1022.10 L1293.55,1009.94 L1326.88,1048.19 L1360.21,1070.53 L1393.54,1069.53 L1426.87,1038.35" fill="none" stroke="#5a9e63" stroke-width="1.6" stroke-linejoin="miter"/>
<path d="M127.00,1100.07 L160.33,1087.44 L193.66,1005.68 L226.99,1010.34 L260.32,1019.31 L293.65,1006.68 L326.98,1045.90 L360.31,986.74 L393.64,1003.69 L426.97,1011.33 L460.30,1097.08 L493.63,1026.29 L526.96,1026.62 L560.29,1047.89 L593.62,1044.90 L626.95,1036.59 L660.28,1098.07 L693.61,1090.76 L726.94,1038.59 L760.27,1034.26 L793.60,1034.60 L826.93,1005.68 L860.26,1046.89 L893.59,1099.07 L926.92,1089.43 L960.25,1038.25 L993.58,1024.29 L1026.91,1020.31 L1060.24,1028.95 L1093.57,1045.56 L1126.90,1100.07 L1160.23,1088.10 L1193.56,1005.68 L1226.89,1010.34 L1260.22,1019.31 L1293.55,1006.68 L1326.88,1046.56 L1360.21,1068.69 L1393.54,1067.66 L1426.87,1036.26" fill="none" stroke="#1e2160" stroke-width="2.3" stroke-linejoin="miter"/>
<line x1="127" y1="933.9" x2="127" y2="1133.3" stroke="#6b6e78" stroke-width="1.5"/>
<line x1="126.25" y1="1134.2" x2="1426.87" y2="1134.2" stroke="#3d3f5e" stroke-width="2"/>
<text x="114" y="1137.80" text-anchor="end" font-size="12" fill="#2d2f48">0</text>
<text x="114" y="1071.33" text-anchor="end" font-size="12" fill="#2d2f48">2K</text>
<text x="114" y="1004.87" text-anchor="end" font-size="12" fill="#2d2f48">4K</text>
<text x="114" y="938.40" text-anchor="end" font-size="12" fill="#2d2f48">6K</text>
<text x="126.00" y="1152.30" text-anchor="middle" font-size="12" fill="#2d2f48">Mar 1</text>
<text x="192.66" y="1152.30" text-anchor="middle" font-size="12" fill="#2d2f48">Mar 3</text>
<text x="259.32" y="1152.30" text-anchor="middle" font-size="12" fill="#2d2f48">Mar 5</text>
<text x="325.98" y="1152.30" text-anchor="middle" font-size="12" fill="#2d2f48">Mar 7</text>
<text x="392.64" y="1152.30" text-anchor="middle" font-size="12" fill="#2d2f48">Mar 9</text>
<text x="459.30" y="1152.30" text-anchor="middle" font-size="12" fill="#2d2f48">Mar 11</text>
<text x="525.96" y="1152.30" text-anchor="middle" font-size="12" fill="#2d2f48">Mar 13</text>
<text x="592.62" y="1152.30" text-anchor="middle" font-size="12" fill="#2d2f48">Mar 15</text>
<text x="659.28" y="1152.30" text-anchor="middle" font-size="12" fill="#2d2f48">Mar 17</text>
<text x="725.94" y="1152.30" text-anchor="middle" font-size="12" fill="#2d2f48">Mar 19</text>
<text x="792.60" y="1152.30" text-anchor="middle" font-size="12" fill="#2d2f48">Mar 21</text>
<text x="859.26" y="1152.30" text-anchor="middle" font-size="12" fill="#2d2f48">Mar 23</text>
<text x="925.92" y="1152.30" text-anchor="middle" font-size="12" fill="#2d2f48">Mar 25</text>
<text x="992.58" y="1152.30" text-anchor="middle" font-size="12" fill="#2d2f48">Mar 27</text>
<text x="1059.24" y="1152.30" text-anchor="middle" font-size="12" fill="#2d2f48">Mar 29</text>
<text x="1125.90" y="1152.30" text-anchor="middle" font-size="12" fill="#2d2f48">Mar 31</text>
<text x="1192.56" y="1152.30" text-anchor="middle" font-size="12" fill="#2d2f48">Apr 2</text>
<text x="1259.22" y="1152.30" text-anchor="middle" font-size="12" fill="#2d2f48">Apr 4</text>
<text x="1325.88" y="1152.30" text-anchor="middle" font-size="12" fill="#2d2f48">Apr 6</text>
<text x="1392.54" y="1152.30" text-anchor="middle" font-size="12" fill="#2d2f48">Apr 8</text>
<rect x="127.8" y="899" width="31" height="6.8" fill="#bcd5e1"/>
<rect x="127.8" y="897.4" width="31" height="1.8" fill="#1b7aa2"/>
<text x="164.8" y="903" font-size="15.5" fill="#2c2e4c">Organic Search</text>
<rect x="297.8" y="899" width="31" height="6.8" fill="#d2d2d4"/>
<rect x="297.8" y="897.4" width="31" height="1.8" fill="#7d7f86"/>
<text x="334.8" y="903" font-size="15.5" fill="#2c2e4c">Direct</text>
<rect x="401.8" y="899" width="31" height="6.8" fill="#f6dfc2"/>
<rect x="401.8" y="897.4" width="31" height="1.8" fill="#e9a33e"/>
<text x="438.8" y="903" font-size="15.5" fill="#2c2e4c">Referral</text>
<rect x="520.8" y="899" width="31" height="6.8" fill="#f5cbc7"/>
<rect x="520.8" y="897.4" width="31" height="1.8" fill="#e0584b"/>
<text x="557.8" y="903" font-size="15.5" fill="#2c2e4c">Paid Search</text>
<rect x="667.8" y="899" width="31" height="6.8" fill="#cfe4d0"/>
<rect x="667.8" y="897.4" width="31" height="1.8" fill="#5a9e63"/>
<text x="704.8" y="903" font-size="15.5" fill="#2c2e4c">Unassigned</text>
<rect x="812.8" y="899" width="31" height="6.8" fill="#d4d0dc"/>
<rect x="812.8" y="897.4" width="31" height="1.8" fill="#6a4a86"/>
<text x="849.8" y="903" font-size="15.5" fill="#2c2e4c">Organic Social</text>
<rect x="977.8" y="899" width="31" height="6.8" fill="#cfe4d0"/>
<rect x="977.8" y="897.4" width="31" height="1.8" fill="#5a9e63"/>
<text x="1014.8" y="903" font-size="15.5" fill="#2c2e4c">Organic Video</text>
<rect x="1139.8" y="899" width="31" height="6.8" fill="#f5cbc7"/>
<rect x="1139.8" y="897.4" width="31" height="1.8" fill="#e0584b"/>
<text x="1176.8" y="903" font-size="15.5" fill="#2c2e4c">Email</text>
<rect x="1242.8" y="899" width="31" height="6.8" fill="#c3d3da"/>
<rect x="1242.8" y="897.4" width="31" height="1.8" fill="#2c6b7e"/>
<text x="1279.8" y="903" font-size="15.5" fill="#2c2e4c">Display</text>
<rect x="127" y="921.5" width="31" height="6.8" fill="#c5c8d2"/>
<rect x="127" y="919.9" width="31" height="1.8" fill="#232560"/>
<text x="164" y="925.5" font-size="15.5" fill="#2c2e4c">Paid Video</text>
</svg>
</body></html>
